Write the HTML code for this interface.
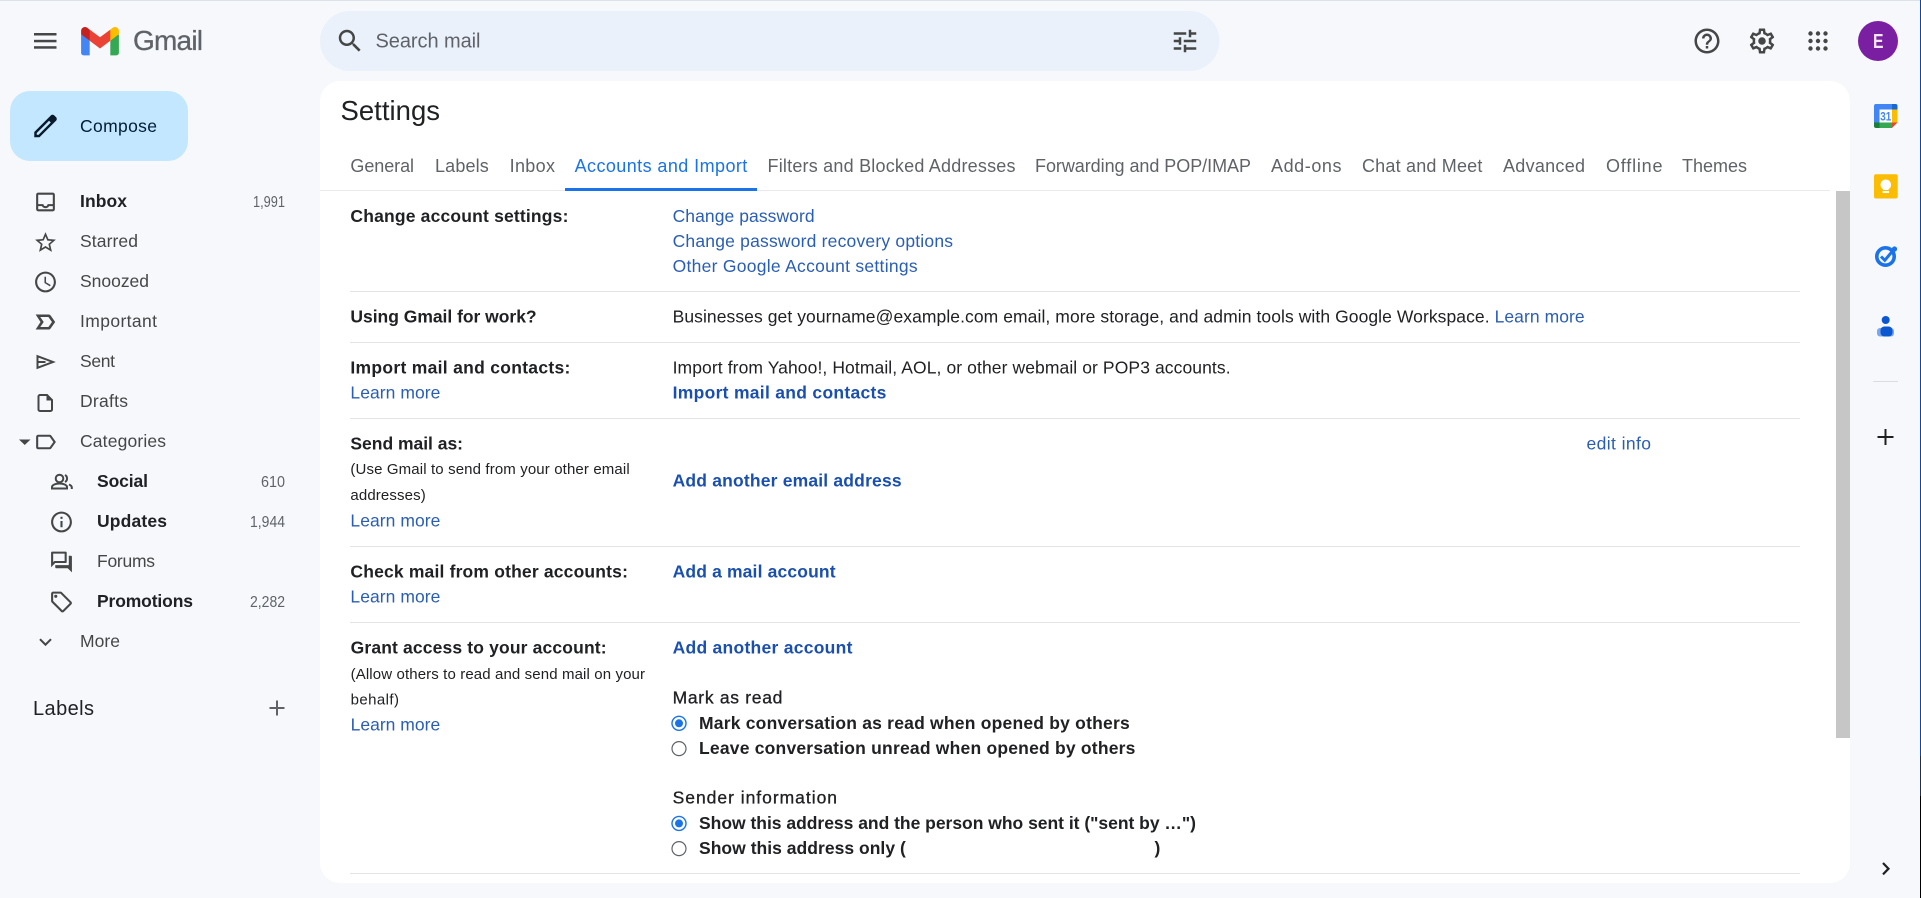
<!DOCTYPE html>
<html lang="en"><head><meta charset="utf-8"><title>Gmail Settings</title>
<style>
html,body{margin:0;padding:0;width:1921px;height:898px;overflow:hidden;background:#f6f8fc}
svg{display:block}
text{font-family:"Liberation Sans",Arial,sans-serif;font-size:17.5px;fill:#202124}
.n{fill:#444746}
.b{font-weight:700}
.l{fill:#2a5db5}
.lb{fill:#1a4fb0;font-weight:700}
.c{fill:#5f6368;font-size:15.5px}
.s{font-size:15px}
.t{fill:#5f6368;font-size:18px}
.i{fill:#444746}
.d{fill:#e3e3e3}
</style></head><body>
<svg xmlns="http://www.w3.org/2000/svg" width="1921" height="898" viewBox="0 0 1921 898">
<rect width="1921" height="898" fill="#f6f8fc"/>
<rect width="1921" height="1" fill="#dde2ea"/>
<rect x="1920" width="1" height="756" fill="#0b47a8"/>
<rect x="1920" y="756" width="1" height="40" fill="#1c2f4d"/>
<rect x="1920" y="796" width="1" height="102" fill="#000"/>

<!-- header -->
<g fill="#444746"><rect x="34" y="33" width="22.500" height="2.500"/><rect x="34" y="39.800" width="22.500" height="2.500"/><rect x="34" y="46.200" width="22.500" height="2.500"/></g>
<svg x="81" y="27" width="38" height="28.500" viewBox="0 0 256 193">
<path fill="#4285F4" d="M58.18 192.05V93.14L27.51 65.08 0 49.5v125.1c0 9.66 7.83 17.45 17.45 17.45h40.73z"/>
<path fill="#34A853" d="M197.82 192.05h40.73c9.66 0 17.45-7.83 17.45-17.45V49.5l-31.16 17.84-27.02 25.8v98.91z"/>
<path fill="#EA4335" d="M58.18 93.14l-4.17-38.65 4.17-36.99L128 69.82l69.82-52.36 4.67 35-4.67 40.68L128 145.51z"/>
<path fill="#FBBC04" d="M197.82 17.45v75.69L256 49.5V26.18c0-21.59-24.64-33.9-41.89-20.95l-16.29 12.22z"/>
<path fill="#C5221F" d="M0 49.5l26.76 20.07L58.18 93.14V17.45L41.89 5.23C24.61-7.72 0 4.59 0 26.18V49.5z"/>
</svg>
<text x="133" y="50" textLength="70" style="font-size:28px;fill:#5f6368;stroke:#5f6368;stroke-width:.3">Gmail</text>

<rect x="320" y="11" width="899.500" height="60" rx="30" fill="#eaf1fb"/>
<svg x="335" y="26" width="30" height="30" viewBox="0 0 24 24"><path class="i" d="M15.5 14h-.79l-.28-.27C15.41 12.59 16 11.11 16 9.5 16 5.91 13.09 3 9.5 3S3 5.91 3 9.5 5.91 16 9.5 16c1.61 0 3.09-.59 4.23-1.57l.27.28v.79l5 4.99L20.49 19l-4.99-5zm-6 0C7.01 14 5 11.99 5 9.5S7.01 5 9.5 5 14 7.01 14 9.500 11.99 14 9.5 14z"/></svg>
<text x="375.500" y="47.500" textLength="105" style="font-size:20px;fill:#5f6368">Search mail</text>
<svg x="1170" y="26" width="30" height="30" viewBox="0 0 24 24"><path class="i" d="M3 17v2h6v-2H3zM3 5v2h10V5H3zm10 16v-2h8v-2h-8v-2h-2v6h2zM7 9v2H3v2h4v2h2V9H7zm14 4v-2H11v2h10zm-6-4h2V7h4V5h-4V3h-2v6z"/></svg>

<svg x="1692" y="26" width="30" height="30" viewBox="0 0 24 24"><path class="i" d="M11 18h2v-2h-2v2zm1-16C6.48 2 2 6.48 2 12s4.48 10 10 10 10-4.48 10-10S17.52 2 12 2zm0 18c-4.41 0-8-3.59-8-8s3.59-8 8-8 8 3.59 8 8-3.59 8-8 8zm0-14c-2.21 0-4 1.79-4 4h2c0-1.1.9-2 2-2s2 .9 2 2c0 2-3 1.75-3 5h2c0-2.25 3-2.5 3-5 0-2.21-1.79-4-4-4z"/></svg>
<svg x="1747" y="26" width="30" height="30" viewBox="0 0 24 24"><path class="i" d="M19.43 12.98c.04-.32.07-.64.07-.98 0-.34-.03-.66-.07-.98l2.11-1.65c.19-.15.24-.42.12-.64l-2-3.46c-.09-.16-.26-.25-.44-.25-.06 0-.12.01-.17.03l-2.49 1c-.52-.4-1.08-.73-1.69-.98l-.38-2.65C14.46 2.18 14.25 2 14 2h-4c-.25 0-.46.18-.49.42l-.38 2.65c-.61.25-1.17.59-1.69.98l-2.49-1c-.06-.02-.12-.03-.18-.03-.17 0-.34.09-.43.25l-2 3.46c-.13.22-.07.49.12.64l2.11 1.65c-.04.32-.07.65-.07.98 0 .33.03.66.07.98l-2.11 1.65c-.19.15-.24.42-.12.64l2 3.46c.09.16.26.25.44.25.06 0 .12-.01.17-.03l2.49-1c.52.4 1.08.73 1.69.98l.38 2.65c.03.24.24.42.49.42h4c.25 0 .46-.18.49-.42l.38-2.65c.61-.25 1.17-.59 1.69-.98l2.49 1c.06.02.12.03.18.03.17 0 .34-.09.43-.25l2-3.46c.12-.22.07-.49-.12-.64l-2.11-1.65zm-1.98-1.71c.04.31.05.52.05.73 0 .21-.02.43-.05.73l-.14 1.13.89.7 1.08.84-.7 1.21-1.27-.51-1.04-.42-.9.68c-.43.32-.84.56-1.25.73l-1.06.43-.16 1.13-.2 1.35h-1.4l-.19-1.35-.16-1.13-1.06-.43c-.43-.18-.83-.41-1.23-.71l-.91-.7-1.06.43-1.27.51-.7-1.21 1.08-.84.89-.7-.14-1.13c-.03-.31-.05-.54-.05-.74s.02-.43.05-.73l.14-1.13-.89-.7-1.08-.84.7-1.21 1.27.51 1.04.42.9-.68c.43-.32.84-.56 1.25-.73l1.06-.43.16-1.13.2-1.35h1.39l.19 1.35.16 1.13 1.06.43c.43.18.83.41 1.23.71l.91.7 1.06-.43 1.27-.51.7 1.21-1.07.85-.89.7.14 1.13z"/><circle class="i" cx="12" cy="12" r="3"/></svg>
<g class="i"><circle cx="1810.500" cy="33.500" r="2.200"/><circle cx="1818" cy="33.500" r="2.200"/><circle cx="1825.500" cy="33.500" r="2.200"/><circle cx="1810.500" cy="41" r="2.200"/><circle cx="1818" cy="41" r="2.200"/><circle cx="1825.500" cy="41" r="2.200"/><circle cx="1810.500" cy="48.500" r="2.200"/><circle cx="1818" cy="48.500" r="2.200"/><circle cx="1825.500" cy="48.500" r="2.200"/></g>
<circle cx="1878" cy="41" r="20" fill="#7b1fa2"/>
<text x="1873" y="48" textLength="10.500" lengthAdjust="spacingAndGlyphs" style="font-size:20px;font-weight:700;fill:#f3e5f5">E</text>

<!-- compose -->
<rect x="10" y="91" width="178" height="70" rx="20" fill="#c2e7ff"/>
<svg x="30.500" y="111" width="30" height="30" viewBox="0 0 24 24"><path fill="#0a1a2a" d="M20.41 4.94l-1.35-1.35c-.78-.78-2.05-.78-2.83 0L3 16.82V21h4.18L20.41 7.77c.79-.78.79-2.05 0-2.83zm-14 14.12L5 19v-1.36l9.82-9.82 1.41 1.41-9.82 9.83z"/></svg>
<text x="80" y="132" textLength="77" style="fill:#001d35">Compose</text>

<!-- sidebar -->
<svg x="33" y="189.500" width="25" height="25" viewBox="0 0 24 24"><path class="i" d="M19 3H5c-1.1 0-2 .9-2 2v14c0 1.1.9 2 2 2h14c1.1 0 2-.9 2-2V5c0-1.1-.9-2-2-2zm0 16H5v-3h3.56c.69 1.19 1.97 2 3.45 2s2.75-.81 3.45-2H19v3zm0-5h-4.99c0 1.1-.9 2-2 2s-2-.9-2-2H5V5h14v9z"/></svg>
<svg x="33" y="230" width="25" height="25" viewBox="0 0 24 24"><path class="i" d="M22 9.24l-7.19-.62L12 2 9.19 8.63 2 9.24l5.46 4.73L5.82 21 12 17.27 18.18 21l-1.63-7.03L22 9.24zM12 15.4l-3.76 2.27 1-4.28-3.32-2.88 4.38-.38L12 6.1l1.71 4.04 4.38.38-3.32 2.88 1 4.28L12 15.4z"/></svg>
<svg x="33" y="269.500" width="25" height="25" viewBox="0 0 24 24"><path class="i" d="M11.99 2C6.47 2 2 6.48 2 12s4.47 10 9.99 10C17.52 22 22 17.52 22 12S17.52 2 11.99 2zM12 20c-4.42 0-8-3.58-8-8s3.58-8 8-8 8 3.58 8 8-3.58 8-8 8zm.5-13H11v6l5.25 3.15.75-1.23-4.5-2.67z"/></svg>
<svg x="33" y="309.500" width="25" height="25" viewBox="0 0 24 24"><path class="i" stroke="#444746" stroke-width=".5" d="M15 19H3l4.5-7L3 5h12c.65 0 1.26.31 1.63.84L21 12l-4.37 6.16c-.37.52-.98.84-1.63.84zm-8.5-2H15l3.5-5L15 7H6.5l3.5 5-3.5 5z"/></svg>
<g fill="none" stroke="#444746" stroke-width="2"><path d="M37.500 356.200L53 362l-15.500 5.800z"/><path d="M37.500 362h8"/></g>
<g fill="none" stroke="#444746" stroke-width="2"><path d="M40 395h7l5 5v9.500a1.500 1.500 0 0 1-1.500 1.500H40a1.500 1.500 0 0 1-1.500-1.500V396.500A1.500 1.500 0 0 1 40 395z"/></g><path class="i" d="M46.500 395v5.500H52z"/>
<path class="i" d="M19 439.500h11.500l-5.750 5.500z"/>
<svg x="33" y="429.500" width="25" height="25" viewBox="0 0 24 24"><path class="i" d="M17.63 5.84C17.27 5.33 16.67 5 16 5L5 5.01C3.9 5.01 3 5.9 3 7v10c0 1.1.9 1.99 2 1.99L16 19c.67 0 1.27-.33 1.63-.84L22 12l-4.37-6.16zM16 17H5V7h11l3.55 5L16 17z"/></svg>
<g fill="none" stroke="#444746" stroke-width="2"><circle cx="59.500" cy="478.500" r="3.800"/><path d="M52 488.500v-1.500c0-2 3.500-3.500 7.500-3.500s7.500 1.500 7.500 3.500v1.500z"/><path d="M65 475a4 4 0 0 1 0 7"/><path d="M69 484.500c1.700.7 2.800 1.600 2.800 3v1.500"/></g>
<svg x="49" y="509.500" width="25" height="25" viewBox="0 0 24 24"><path class="i" d="M11 7h2v2h-2zm0 4h2v6h-2zm1-9C6.48 2 2 6.48 2 12s4.48 10 10 10 10-4.48 10-10S17.52 2 12 2zm0 18c-4.41 0-8-3.59-8-8s3.59-8 8-8 8 3.59 8 8-3.59 8-8 8z"/></svg>
<svg x="49" y="549.500" width="25" height="25" viewBox="0 0 24 24"><path class="i" d="M15 4v7H5.17L4 12.17V4h11m1-2H3c-.55 0-1 .45-1 1v14l4-4h10c.55 0 1-.45 1-1V3c0-.55-.45-1-1-1zm5 4h-2v9H6v2c0 .55.45 1 1 1h11l4 4V7c0-.55-.45-1-1-1z"/></svg>
<svg x="49" y="589.500" width="25" height="25" viewBox="0 0 24 24"><path class="i" d="M21.41 11.58l-9-9C12.05 2.22 11.55 2 11 2H4c-1.1 0-2 .9-2 2v7c0 .55.22 1.05.59 1.42l9 9c.36.36.86.58 1.41.58s1.05-.22 1.41-.59l7-7c.37-.36.59-.86.59-1.41s-.23-1.06-.59-1.42zM13 20.01L4 11V4h7v-.01l9 9-7 7.02z"/><circle class="i" cx="6.500" cy="6.500" r="1.500"/></svg>
<svg x="33" y="629.500" width="25" height="25" viewBox="0 0 24 24"><path class="i" d="M7.41 8.59L12 13.17l4.59-4.58L18 10l-6 6-6-6z"/></svg>

<text class="b" x="80" y="207" textLength="47">Inbox</text><text class="c" x="253" y="207" textLength="32" lengthAdjust="spacingAndGlyphs">1,991</text>
<text class="n" x="80" y="247" textLength="58">Starred</text>
<text class="n" x="80" y="287" textLength="69">Snoozed</text>
<text class="n" x="80" y="327" textLength="77">Important</text>
<text class="n" x="80" y="367" textLength="35">Sent</text>
<text class="n" x="80" y="407" textLength="48">Drafts</text>
<text class="n" x="80" y="447" textLength="86">Categories</text>
<text class="b" x="97" y="487" textLength="51">Social</text><text class="c" x="261" y="487" textLength="24" lengthAdjust="spacingAndGlyphs">610</text>
<text class="b" x="97" y="527" textLength="70">Updates</text><text class="c" x="250" y="527" textLength="35" lengthAdjust="spacingAndGlyphs">1,944</text>
<text class="n" x="97" y="567" textLength="58">Forums</text>
<text class="b" x="97" y="607" textLength="96">Promotions</text><text class="c" x="250" y="607" textLength="35" lengthAdjust="spacingAndGlyphs">2,282</text>
<text class="n" x="80" y="647" textLength="40">More</text>
<text x="33" y="715" textLength="61" style="font-size:20px">Labels</text>
<path d="M277 700.500v15M269.500 708h15" stroke="#5f6368" stroke-width="2" fill="none"/>

<!-- card -->
<rect x="320" y="81" width="1530" height="802" rx="20" fill="#fff"/>
<text x="340.500" y="120" textLength="99.500" style="font-size:27.500px">Settings</text>

<text class="t" x="350.400" y="172" textLength="63.600">General</text>
<text class="t" x="435" y="172" textLength="53.800">Labels</text>
<text class="t" x="509.600" y="172" textLength="45.400">Inbox</text>
<text x="574.600" y="172" textLength="172.700" style="fill:#1a73e8;font-size:18px">Accounts and Import</text>
<text class="t" x="767.500" y="172" textLength="248">Filters and Blocked Addresses</text>
<text class="t" x="1035" y="172" textLength="216">Forwarding and POP/IMAP</text>
<text class="t" x="1271" y="172" textLength="70.500">Add-ons</text>
<text class="t" x="1362" y="172" textLength="120.400">Chat and Meet</text>
<text class="t" x="1503" y="172" textLength="82">Advanced</text>
<text class="t" x="1606" y="172" textLength="56.500">Offline</text>
<text class="t" x="1682" y="172" textLength="65">Themes</text>
<rect x="320" y="190" width="1510" height="1" fill="#e8eaed"/>
<rect x="565" y="188" width="192" height="3" fill="#1a73e8"/>
<rect x="1836" y="191" width="14" height="547" fill="#c6c6c6"/>

<!-- rows -->
<rect class="d" x="350" y="291" width="1450" height="1"/>
<rect class="d" x="350" y="342" width="1450" height="1"/>
<rect class="d" x="350" y="418" width="1450" height="1"/>
<rect class="d" x="350" y="546" width="1450" height="1"/>
<rect class="d" x="350" y="622" width="1450" height="1"/>
<rect class="d" x="350" y="873" width="1450" height="1"/>

<text class="b" x="350.400" y="222" textLength="218">Change account settings:</text>
<text class="l" x="672.600" y="222" textLength="142">Change password</text>
<text class="l" x="672.600" y="247" textLength="280.400">Change password recovery options</text>
<text class="l" x="672.600" y="272" textLength="245">Other Google Account settings</text>

<text class="b" x="350.400" y="322.500" textLength="186.200">Using Gmail for work?</text>
<text x="672.600" y="322.500" textLength="817">Businesses get yourname@example.com email, more storage, and admin tools with Google Workspace.</text>
<text class="l" x="1494.600" y="322.500" textLength="90">Learn more</text>

<text class="b" x="350.400" y="373.500" textLength="219.900">Import mail and contacts:</text>
<text class="l" x="350.400" y="398.500" textLength="90">Learn more</text>
<text x="672.600" y="373.500" textLength="558">Import from Yahoo!, Hotmail, AOL, or other webmail or POP3 accounts.</text>
<text class="lb" x="672.600" y="398.500" textLength="213.800">Import mail and contacts</text>

<text class="b" x="350.400" y="449.500" textLength="112.600">Send mail as:</text>
<text class="s" x="350.400" y="474" textLength="279.300">(Use Gmail to send from your other email</text>
<text class="s" x="350.400" y="500" textLength="75.300">addresses)</text>
<text class="l" x="350.400" y="526.700" textLength="90">Learn more</text>
<text class="l" x="1586.500" y="449.500" textLength="64.500">edit info</text>
<text class="lb" x="672.600" y="486.500" textLength="229">Add another email address</text>

<text class="b" x="350.400" y="577.500" textLength="277.500">Check mail from other accounts:</text>
<text class="l" x="350.400" y="602.500" textLength="90">Learn more</text>
<text class="lb" x="672.600" y="577.500" textLength="163">Add a mail account</text>

<text class="b" x="350.600" y="653.500" textLength="256">Grant access to your account:</text>
<text class="s" x="350.600" y="679" textLength="294.400">(Allow others to read and send mail on your</text>
<text class="s" x="350.600" y="704.500" textLength="48.400">behalf)</text>
<text class="l" x="350.600" y="730.700" textLength="89.600">Learn more</text>
<text class="lb" x="672.600" y="653.500" textLength="179.800">Add another account</text>
<text x="672.600" y="703.700" textLength="109.800" style="stroke:#202124;stroke-width:.3">Mark as read</text>
<text class="b" x="699" y="729" textLength="430.700">Mark conversation as read when opened by others</text>
<text class="b" x="699" y="754" textLength="436.400">Leave conversation unread when opened by others</text>
<text x="672.600" y="803.700" textLength="164.400" style="stroke:#202124;stroke-width:.3">Sender information</text>
<text class="b" x="699" y="829" textLength="497">Show this address and the person who sent it ("sent by …")</text>
<text class="b" x="699" y="854" textLength="206.800">Show this address only (</text>
<text class="b" x="1154.500" y="854">)</text>

<g fill="none">
<circle cx="679" cy="723.300" r="7" stroke="#1a73e8" stroke-width="1.400"/><circle cx="679" cy="723.300" r="4" fill="#1a73e8"/>
<circle cx="679" cy="748.600" r="7" stroke="#5f6368" stroke-width="1.200"/>
<circle cx="679" cy="823.400" r="7" stroke="#1a73e8" stroke-width="1.400"/><circle cx="679" cy="823.400" r="4" fill="#1a73e8"/>
<circle cx="679" cy="848.600" r="7" stroke="#5f6368" stroke-width="1.200"/>
</g>

<!-- side panel -->
<rect x="1874" y="104" width="23.500" height="24" rx="2" fill="#fff"/>
<path fill="#4285f4" d="M1876 104h16.500v5.500h-13v13h-5.500V106a2 2 0 0 1 2-2z"/>
<path fill="#1967d2" d="M1892 104h3.500a2 2 0 0 1 2 2v3.500H1892z"/>
<path fill="#fbbc04" d="M1892 109.500h5.500v13H1892z"/>
<path fill="#34a853" d="M1879.500 122.500h12.500v5.500h-12.500z"/>
<path fill="#188038" d="M1874 122.500h5.500v5.500H1876a2 2 0 0 1-2-2z"/>
<path fill="#ea4335" d="M1892 122.500h5.500l-5.500 5.500z"/>
<text x="1880.300" y="120.700" textLength="11" lengthAdjust="spacingAndGlyphs" style="font-size:11.500px;font-weight:700;fill:#4285f4">31</text>

<rect x="1874" y="174.300" width="23.700" height="24.200" rx="2" fill="#fbbc04"/>
<circle cx="1885.800" cy="184.800" r="5.300" fill="#fff"/>
<rect x="1883" y="187" width="5.600" height="3" fill="#fff"/>
<rect x="1882.500" y="191" width="6.600" height="2" fill="#fff"/>

<circle cx="1885.500" cy="256.500" r="8.700" fill="none" stroke="#1a73e8" stroke-width="3.600"/>
<path d="M1881 256.500l3.800 3.800 6.700-8" fill="none" stroke="#1a73e8" stroke-width="3"/>
<circle cx="1894.500" cy="249" r="2.600" fill="#1a73e8"/>

<circle cx="1885.700" cy="320" r="4" fill="#0b57d0"/>
<rect x="1877" y="328" width="17" height="8.500" rx="3" fill="#7da6f0"/>
<rect x="1880.500" y="326.500" width="12" height="10" rx="4" fill="#0b57d0"/>

<rect x="1873" y="381" width="25" height="1" fill="#dadce0"/>
<path d="M1885.500 429v16M1877.500 437h16" stroke="#1f1f1f" stroke-width="2" fill="none"/>
<path d="M1883 863l5.500 5.700-5.500 5.700" stroke="#1f1f1f" stroke-width="2.200" fill="none"/>
</svg>
</body></html>
